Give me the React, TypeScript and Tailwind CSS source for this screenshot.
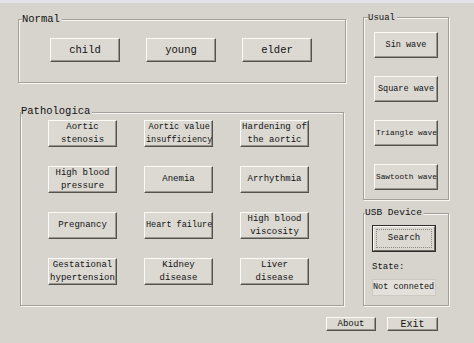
import type { ReactNode } from "react"

const face = "bg-[#d7d4ce]"

function Btn({
  children,
  className = "",
  left = false,
}: {
  children: ReactNode
  className?: string
  left?: boolean
}) {
  return (
    <div
      className={`flex items-center overflow-hidden ${left ? "justify-start pl-[1px]" : "justify-center"} bg-[#dcd9d3] border border-t-[#fbfaf7] border-l-[#fbfaf7] border-r-[#55524e] border-b-[#55524e] shadow-[inset_-1px_-1px_0_#99968f] leading-[13px] text-[#111] ${className}`}
    >
      <span className="whitespace-pre text-center">{children}</span>
    </div>
  )
}

function Group({
  label,
  className = "",
  labelClass = "",
  children,
}: {
  label: string
  className?: string
  labelClass?: string
  children: ReactNode
}) {
  return (
    <div
      className={`relative border border-[#a3a09b] shadow-[inset_1px_1px_0_#f7f6f3,1px_1px_0_#f7f6f3] ${className}`}
    >
      <span className={`absolute ${face} pr-[2px] leading-[12px] text-[#111] ${labelClass}`}>
        {label}
      </span>
      {children}
    </div>
  )
}

// tight labels get a slightly smaller size so they still fit the button
const pathologic: { text: string; left?: boolean; size: string }[] = [
  { text: "Aortic\nstenosis", size: "text-[9px]" },
  { text: "Aortic value\ninsufficiency", left: true, size: "text-[8.5px]" },
  { text: "Hardening of\nthe aortic", size: "text-[9px]" },
  { text: "High blood\npressure", size: "text-[9px]" },
  { text: "Anemia", size: "text-[9px]" },
  { text: "Arrhythmia", size: "text-[9px]" },
  { text: "Pregnancy", size: "text-[9px]" },
  { text: "Heart failure", left: true, size: "text-[8.5px]" },
  { text: "High blood\nviscosity", size: "text-[9px]" },
  { text: "Gestational\nhypertension", size: "text-[9px]" },
  { text: "Kidney\ndisease", size: "text-[9px]" },
  { text: "Liver\ndisease", size: "text-[9px]" },
]

const waves = [
  { text: "Sin wave", size: "text-[8.5px]" },
  { text: "Square wave", size: "text-[8.5px]" },
  { text: "Triangle wave", left: true, size: "text-[7.8px]" },
  { text: "Sawtooth wave", left: true, size: "text-[7.8px]" },
]

export default function App() {
  return (
    <div className={`w-[474px] h-[343px] overflow-hidden ${face} font-['Liberation_Mono',monospace]`}>
      <div className="h-[3px] bg-[#e4e2e9]" />

      <div className="flex items-start pl-[18px] h-[303px]">
        {/* left column */}
        <div className="w-[328px] flex flex-col">
          <Group label="Normal" className="mt-[16px] h-[64px]" labelClass="-top-[7px] left-[3px] text-[10.5px]">
            <div className="flex gap-x-[26px] pl-[31px] pt-[18px]">
              <Btn className="w-[70px] h-[24px] text-[10.5px]">child</Btn>
              <Btn className="w-[70px] h-[24px] text-[10.5px]">young</Btn>
              <Btn className="w-[70px] h-[24px] text-[10.5px]">elder</Btn>
            </div>
          </Group>

          <Group
            label="Pathologica"
            className="mt-[29px] ml-[2px] w-[324px] h-[194px]"
            labelClass="-top-[8px] left-[0px] text-[10.5px]"
          >
            <div className="grid grid-cols-[69px_69px_69px] gap-x-[27px] gap-y-[19px] pl-[27px] pt-[7px]">
              {pathologic.map((p) => (
                <Btn key={p.text} left={p.left} className={`h-[27px] ${p.size}`}>
                  {p.text}
                </Btn>
              ))}
            </div>
          </Group>
        </div>

        {/* right column */}
        <div className="ml-[17px] w-[86px] flex flex-col">
          <Group label="Usual" className="mt-[14px] h-[183px]" labelClass="-top-[6px] left-[4px] text-[9px]">
            <div className="flex flex-col gap-y-[18px] pl-[10px] pt-[14px]">
              {waves.map((w) => (
                <Btn key={w.text} left={w.left} className={`w-[64px] h-[26px] ${w.size}`}>
                  {w.text}
                </Btn>
              ))}
            </div>
          </Group>

          <Group label="USB Device" className="mt-[13px] h-[93px]" labelClass="-top-[7px] left-[1px] text-[9.5px]">
            <div className="flex flex-col pl-[8px] pt-[11px]">
              <div className="w-[64px] h-[27px] border border-[#2e2d2b] flex">
                <div className="flex-1 flex p-[2px] border border-t-[#fbfaf7] border-l-[#fbfaf7] border-r-[#6a6763] border-b-[#6a6763] bg-[#dcd9d3]">
                  <div className="flex-1 flex items-center justify-center border border-dotted border-[#8a8782] text-[9px] text-[#111]">
                    Search
                  </div>
                </div>
              </div>
              <div className="mt-[9px] text-[9px] leading-[12px] text-[#111]">State:</div>
              <div className="mt-[6px] w-[64px] h-[17px] flex items-center bg-[#e3e0db] border border-[#ccc9c3] text-[8.5px] text-[#111] whitespace-nowrap overflow-hidden">
                Not conneted
              </div>
            </div>
          </Group>
        </div>
      </div>

      <div className="flex justify-end gap-x-[11px] pr-[36px] mt-[11px]">
        <Btn className="w-[50px] h-[14px] text-[9px]">About</Btn>
        <Btn className="w-[51px] h-[14px] text-[10px]">Exit</Btn>
      </div>
    </div>
  )
}
